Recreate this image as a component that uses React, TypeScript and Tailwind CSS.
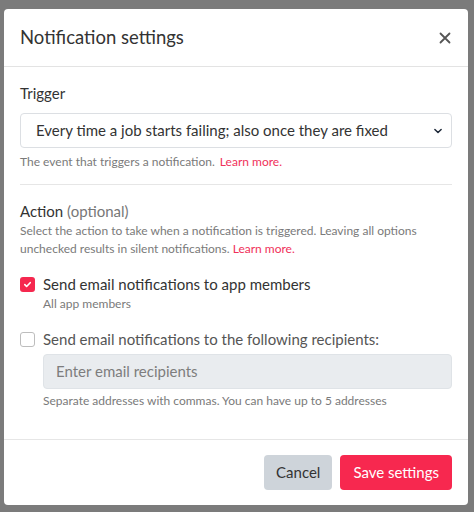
import React from "react";

const font = { fontFamily: "Lato, 'Noto Sans', sans-serif" };

const Chevron = () => (
  <svg width="10" height="10" viewBox="0 0 16 16" className="text-gray-800">
    <path d="M3 5.5l5 5 5-5" fill="none" stroke="currentColor" strokeWidth="2.4" strokeLinecap="round" strokeLinejoin="round" />
  </svg>
);

const CloseIcon = () => (
  <svg width="12" height="12" viewBox="0 0 12 12" className="text-[#555]">
    <path d="M1.5 1.5l9 9M10.5 1.5l-9 9" stroke="currentColor" strokeWidth="1.8" strokeLinecap="round" />
  </svg>
);

export default function App() {
  return (
    <div className="w-[474px] h-[512px] bg-[#7b7b7b] pt-[9px] pl-[4px]" style={font}>
      <div className="w-[464px] h-[496px] bg-white rounded-[4px] flex flex-col text-[#2c2c2c]">
        {/* header */}
        <div className="h-[58px] flex items-center justify-between pl-[16px] pr-[17px] border-b border-[#e3e3e3]">
          <span className="text-[18.5px] text-[#333]">Notification settings</span>
          <CloseIcon />
        </div>

        {/* body */}
        <div className="flex-1 px-[16px] pt-[16px]">
          <div className="text-[15px] leading-[20px] text-[#333]">Trigger</div>
          <div className="mt-[10px] h-[35px] border border-[#dcdfe3] rounded-[4px] flex items-center justify-between pl-[15px] pr-[8px]">
            <span className="text-[15px] text-[#333]">Every time a job starts failing; also once they are fixed</span>
            <Chevron />
          </div>
          <div className="mt-[5px] text-[12px] leading-[18px] text-[#7a7a7a]">
            The event that triggers a notification.{" "}
            <span className="text-[#f0315a] ml-[2px]">Learn more.</span>
          </div>

          <div className="mt-[13px] border-t border-[#e6e6e6]" />

          <div className="mt-[16px] text-[15px] leading-[20px] text-[#333]">
            Action <span className="text-[#777]">(optional)</span>
          </div>
          <div className="mt-[1px] text-[12px] leading-[18px] text-[#7a7a7a]">
            Select the action to take when a notification is triggered. Leaving all options unchecked results in silent notifications.{" "}
            <span className="text-[#f0315a]">Learn more.</span>
          </div>

          <div className="mt-[16px] flex items-center gap-[8px]">
            <div className="w-[15px] h-[15px] rounded-[3px] bg-[#f5284f] flex items-center justify-center">
              <svg width="9" height="9" viewBox="0 0 10 10">
                <path d="M2 5.2l2 2 4-4.2" fill="none" stroke="white" strokeWidth="1.8" strokeLinecap="round" strokeLinejoin="round" />
              </svg>
            </div>
            <span className="text-[15px] leading-[20px] text-[#333]">Send email notifications to app members</span>
          </div>
          <div className="pl-[23px] mt-[1px] text-[12px] leading-[18px] text-[#7a7a7a]">All app members</div>

          <div className="mt-[16px] flex items-center gap-[8px]">
            <div className="w-[15px] h-[15px] rounded-[3px] border border-[#bdbdbd] bg-white" />
            <span className="text-[15px] leading-[20px] text-[#555]">Send email notifications to the following recipients:</span>
          </div>
          <div className="pl-[23px]">
            <div className="mt-[5px] h-[35px] rounded-[4px] bg-[#e9ecef] border border-[#dfe3e7] flex items-center pl-[12px] text-[15px] text-[#7d7d7d]">
              Enter email recipients
            </div>
            <div className="mt-[3px] text-[12px] leading-[18px] text-[#7a7a7a]">
              Separate addresses with commas. You can have up to 5 addresses
            </div>
          </div>
        </div>

        {/* footer */}
        <div className="h-[66px] border-t border-[#e6e6e6] flex items-center justify-end gap-[8px] pr-[16px]">
          <button className="h-[35px] px-[12px] rounded-[4px] bg-[#ced4da] text-[15px] text-[#333]">Cancel</button>
          <button className="h-[35px] px-[13px] rounded-[4px] bg-[#f7284f] text-[15px] text-white">Save settings</button>
        </div>
      </div>
    </div>
  );
}
